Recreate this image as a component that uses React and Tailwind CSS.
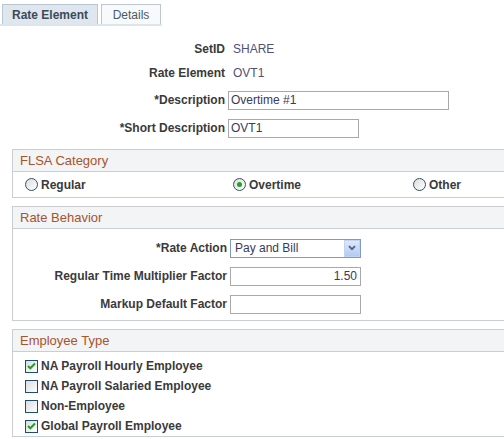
import React from "react";

const font = { fontFamily: '"Liberation Sans", Arial, sans-serif' };

function Radio({ checked }) {
  return (
    <span className="relative inline-flex w-[13px] h-[13px] shrink-0 rounded-full border border-[#2f4f6f] bg-gradient-to-br from-[#dcdcdc] to-[#ffffff] items-center justify-center">
      {checked && <span className="w-[5px] h-[5px] rounded-full bg-[#22a322]" />}
    </span>
  );
}

function Check({ checked }) {
  return (
    <span className="inline-flex w-[13px] h-[13px] shrink-0 border border-[#1c4f6e] bg-gradient-to-br from-[#dcdcdc] to-[#ffffff] items-center justify-center">
      {checked && (
        <svg width="9" height="8" viewBox="0 0 9 8">
          <path d="M1 4 L3.3 6.3 L8 1.5" fill="none" stroke="#1ea11e" strokeWidth="2" />
        </svg>
      )}
    </span>
  );
}

function SectionHeader({ children }) {
  return (
    <div className="h-[23px] border border-[#c9ced2] bg-[#f2f4f5] flex items-center pl-[7px] text-[13px] text-[#a9532b]">
      {children}
    </div>
  );
}

export default function App() {
  return (
    <div className="w-[504px] h-[439px] overflow-hidden bg-white" style={font}>
      {/* Tabs */}
      <div className="pt-[4px]">
        <div className="flex items-end pl-[2px] gap-[3px]">
          <div className="h-[20px] w-[96px] border-t border-x border-[#b9c6d3] bg-[#dfe6ee] flex items-center justify-center text-[12px] font-bold text-[#3a4a5a]">
            Rate Element
          </div>
          <div className="h-[20px] w-[60px] border-t border-x border-[#bcc7d2] bg-[#f8f9fb] flex items-center justify-center text-[12px] text-[#4a5a6a]">
            Details
          </div>
        </div>
        <div className="w-[162px] h-[2px] bg-[#dde5ed]" />
      </div>

      {/* Header fields */}
      <div className="mt-[11px] grid grid-cols-[225px_1fr] text-[12px]">
        <div className="h-[24px] flex items-center justify-end font-bold text-[#3a3a3a]">SetID</div>
        <div className="h-[24px] flex items-center pl-[8px] text-[#50507a]">SHARE</div>
        <div className="h-[24px] flex items-center justify-end font-bold text-[#3a3a3a]">Rate Element</div>
        <div className="h-[24px] flex items-center pl-[8px] text-[#50507a]">OVT1</div>
        <div className="h-[30px] flex items-center justify-end font-bold text-[#3a3a3a]">*Description</div>
        <div className="h-[30px] flex items-center pl-[3px]">
          <div className="w-[221px] h-[19px] border border-[#a9a9a9] flex items-center pl-[2px] text-[#3a3a5a]">Overtime #1</div>
        </div>
        <div className="h-[26px] flex items-center justify-end font-bold text-[#3a3a3a]">*Short Description</div>
        <div className="h-[26px] flex items-center pl-[3px]">
          <div className="w-[131px] h-[19px] border border-[#a9a9a9] flex items-center pl-[2px] text-[#3a3a5a]">OVT1</div>
        </div>
      </div>

      {/* FLSA Category */}
      <div className="ml-[12px] w-[500px] mt-[8px]">
        <SectionHeader>FLSA Category</SectionHeader>
        <div className="h-[26px] border-x border-b border-[#c9ced2] flex items-center pl-[12px] text-[12px] font-bold text-[#3a3a3a]">
          <div className="w-[208px] flex items-center gap-[3px]"><Radio /><span>Regular</span></div>
          <div className="w-[180px] flex items-center gap-[3px]"><Radio checked /><span>Overtime</span></div>
          <div className="flex items-center gap-[3px]"><Radio /><span>Other</span></div>
        </div>
      </div>

      {/* Rate Behavior */}
      <div className="ml-[12px] w-[500px] mt-[8px]">
        <SectionHeader>Rate Behavior</SectionHeader>
        <div className="border-x border-b border-[#c9ced2] pt-[5px] pb-[2px] grid grid-cols-[214px_1fr] text-[12px]">
          <div className="h-[28px] flex items-center justify-end font-bold text-[#3a3a3a]">*Rate Action</div>
          <div className="h-[28px] flex items-center pl-[3px]">
            <div className="w-[131px] h-[19px] border border-[#7f9db9] flex items-center bg-white">
              <span className="flex-1 pl-[4px] text-[#3a3a5a]">Pay and Bill</span>
              <span className="w-[16px] h-[17px] bg-gradient-to-b from-[#dfe8fb] to-[#b5c9f3] border border-[#c3d3f5] flex items-center justify-center">
                <svg width="8" height="6" viewBox="0 0 8 6">
                  <path d="M1 1.2 L4 4.2 L7 1.2" fill="none" stroke="#4d6185" strokeWidth="1.8" />
                </svg>
              </span>
            </div>
          </div>
          <div className="h-[28px] flex items-center justify-end font-bold text-[#3a3a3a]">Regular Time Multiplier Factor</div>
          <div className="h-[28px] flex items-center pl-[3px]">
            <div className="w-[131px] h-[19px] border border-[#a9a9a9] flex items-center justify-end pr-[3px] text-[#3a3a5a]">1.50</div>
          </div>
          <div className="h-[28px] flex items-center justify-end font-bold text-[#3a3a3a]">Markup Default Factor</div>
          <div className="h-[28px] flex items-center pl-[3px]">
            <div className="w-[131px] h-[19px] border border-[#a9a9a9]" />
          </div>
        </div>
      </div>

      {/* Employee Type */}
      <div className="ml-[12px] w-[500px] mt-[8px]">
        <SectionHeader>Employee Type</SectionHeader>
        <div className="border-x border-b border-[#c9ced2] pt-[4px] pl-[12px] text-[12px] font-bold text-[#3a3a3a]">
          {[
            ["NA Payroll Hourly Employee", true],
            ["NA Payroll Salaried Employee", false],
            ["Non-Employee", false],
            ["Global Payroll Employee", true],
          ].map(([l, c]) => (
            <div key={l} className="h-[20px] flex items-center gap-[3px]">
              <Check checked={c} />
              <span>{l}</span>
            </div>
          ))}
        </div>
      </div>
    </div>
  );
}
